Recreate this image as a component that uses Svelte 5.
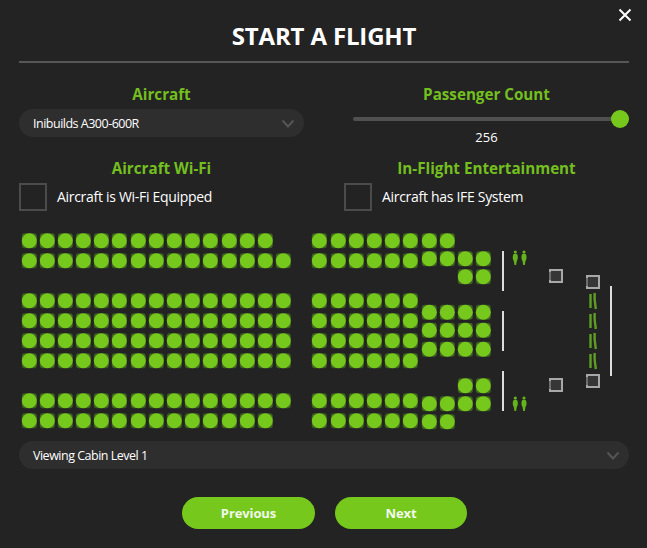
<script>
  const aft = [29.3, 47.3, 65.3, 83.3, 101.3, 119.3, 138.3, 156.3, 174.3, 192.3, 210.3, 229.3, 247.3, 265.3, 283.3];
  const mid = [319.3, 338.3, 356.3, 374.3, 392.3, 410.3];
  const cols = [429.3, 447.3, 465.3, 483.3];
  const seats = [];
  const row = (xs, y) => xs.forEach((x) => seats.push({ x, y }));
  row(aft.slice(0, 14), 240.7);
  row(aft, 260.7);
  row(aft, 300.7);
  row(aft, 320.7);
  row(aft, 340.7);
  row(aft, 360.7);
  row(aft, 400.7);
  row(aft.slice(0, 14), 420.7);
  row([...mid, cols[0], cols[1]], 240.7);
  row(mid, 260.7);
  row(cols, 258.7);
  row(cols.slice(2), 276.7);
  [300.7, 320.7, 340.7, 360.7, 400.7, 420.7].forEach((y) => row(mid, y));
  [312.3, 330.3, 349.3].forEach((y) => row(cols, y));
  row(cols.slice(2), 385.7);
  row(cols, 403.7);
  row(cols.slice(0, 2), 421.7);

  const galleys = [
    { x: 549, y: 269 },
    { x: 586, y: 275 },
    { x: 549, y: 378 },
    { x: 586, y: 374 }
  ];
  const crew = [
    { x: 515.3, y: 250.5 },
    { x: 524, y: 250.5 },
    { x: 515.3, y: 396.5 },
    { x: 524, y: 396.5 }
  ];
  const attendants = [293, 313, 333, 353];
  const bars = [
    { x: 502, y1: 251, y2: 291 },
    { x: 502, y1: 311, y2: 351 },
    { x: 502, y1: 371, y2: 411 },
    { x: 610, y1: 286, y2: 376 }
  ];
</script>

<div class="modal">
  <button class="close" aria-label="Close">
    <svg width="14" height="14" viewBox="0 0 14 14"><path d="M1.5 1.5 12.5 12.5M12.5 1.5 1.5 12.5" /></svg>
  </button>

  <h1>START A FLIGHT</h1>
  <div class="rule"></div>

  <div class="grid top">
    <section>
      <h2>Aircraft</h2>
      <div class="select">
        <span>Inibuilds A300-600R</span>
        <svg class="chev" width="14" height="9" viewBox="0 0 14 9"><path d="M1.5 1.5 7 7.5 12.5 1.5" /></svg>
      </div>
    </section>
    <section>
      <h2>Passenger Count</h2>
      <div class="slider"><div class="thumb"></div></div>
      <div class="count">256</div>
    </section>
  </div>

  <div class="grid second">
    <section>
      <h2>Aircraft Wi-Fi</h2>
      <label class="check"><span class="box"></span><span class="check-text">Aircraft is Wi-Fi Equipped</span></label>
    </section>
    <section>
      <h2>In-Flight Entertainment</h2>
      <label class="check"><span class="box"></span><span class="check-text">Aircraft has IFE System</span></label>
    </section>
  </div>

  <svg class="map" width="647" height="216" viewBox="0 225 647 216">
    {#each seats as s}
      <rect class="seat-back" x={s.x - 7.5} y={s.y - 7.5} width="15" height="15" rx="3" />
      <circle class="seat" cx={s.x} cy={s.y} r="7.5" />
    {/each}
    {#each bars as b}
      <rect class="bar" x={b.x} y={b.y1} width="2" height={b.y2 - b.y1} />
    {/each}
    {#each galleys as g}
      <rect class="galley" x={g.x + 1} y={g.y + 1} width="12" height="12" />
      <path class="galley-in" d="M{g.x + 1} {g.y + 3}V{g.y + 11}" />
    {/each}
    {#each crew as c}
      <g transform="translate({c.x} {c.y})">
        <circle class="crew" cx="0" cy="1.6" r="1.6" />
        <path class="crew" d="M-1.6 3.6C-3 5-2.8 9-1.5 10.5L-.8 14.5H.8L1.5 10.5C2.8 9 3 5 1.6 3.6Z" />
      </g>
    {/each}
    {#each attendants as y}
      <path class="att" d="M590.5 {y + 1}V{y + 15}" />
      <path class="att" d="M594.8 {y}C594 {y + 5} 595 {y + 9} 595.8 {y + 16}" />
    {/each}
  </svg>

  <div class="select wide">
    <span>Viewing Cabin Level 1</span>
    <svg class="chev" width="14" height="9" viewBox="0 0 14 9"><path d="M1.5 1.5 7 7.5 12.5 1.5" /></svg>
  </div>

  <div class="actions">
    <button class="btn prev">Previous</button>
    <button class="btn next">Next</button>
  </div>
</div>

<style>
  :global(body) {
    margin: 0;
    background: #232323;
  }
  .modal {
    position: relative;
    box-sizing: border-box;
    width: 647px;
    height: 548px;
    padding: 19px 18px 0 19px;
    background: #232323;
    color: #fff;
    font-family: "Open Sans", "Liberation Sans", sans-serif;
    overflow: hidden;
  }
  .close {
    position: absolute;
    top: 8px;
    right: 15px;
    padding: 0;
    width: 14px;
    height: 14px;
    border: 0;
    background: none;
  }
  .close svg {
    display: block;
  }
  .close path {
    stroke: #fff;
    stroke-width: 2;
    fill: none;
  }
  h1 {
    margin: 0;
    font-size: 24px;
    line-height: 34px;
    font-weight: 700;
    text-align: center;
    letter-spacing: -0.15px;
  }
  .rule {
    height: 2px;
    margin-top: 8px;
    background: #565656;
  }
  .grid {
    display: grid;
    grid-template-columns: 285px 285px;
    column-gap: 40px;
  }
  .top {
    margin-top: 20px;
  }
  .second {
    margin-top: 11px;
    height: 68px;
  }
  h2 {
    margin: 0;
    font-size: 15.2px;
    line-height: 22px;
    font-weight: 700;
    color: #73bf1f;
    text-align: center;
  }
  .select {
    display: flex;
    align-items: center;
    justify-content: space-between;
    box-sizing: border-box;
    height: 28px;
    margin-top: 4px;
    padding: 1px 9px 0 14px;
    border-radius: 14px;
    background: #2e2e2e;
    font-size: 12.5px;
    letter-spacing: -0.5px;
  }
  .chev path {
    fill: none;
    stroke: #555;
    stroke-width: 2;
  }
  .slider {
    position: relative;
    height: 4px;
    margin: 12px 0 0 9px;
    background: #505050;
    border-radius: 2px;
  }
  .thumb {
    position: absolute;
    right: 0;
    top: -7px;
    width: 18px;
    height: 18px;
    border-radius: 50%;
    background: #76c81d;
  }
  .count {
    margin-top: 7px;
    font-size: 13px;
    line-height: 18px;
    text-align: center;
  }
  .check {
    display: flex;
    align-items: center;
    gap: 10px;
    margin-top: 4px;
    font-size: 14px;
    letter-spacing: -0.3px;
  }
  .check-text {
    padding-bottom: 2px;
  }
  .box {
    box-sizing: border-box;
    width: 28px;
    height: 28px;
    border: 2px solid #4b4b4b;
  }
  .map {
    display: block;
    margin: 0 0 0 -19px;
  }
  .seat-back {
    fill: #3f6220;
  }
  .seat {
    fill: #76c81d;
  }
  .bar {
    fill: #dcdcdc;
  }
  .galley {
    fill: #363636;
    stroke: #a8a8a8;
    stroke-width: 2;
  }
  .galley-in {
    fill: none;
    stroke: #6e6e6e;
    stroke-width: 2;
  }
  .crew {
    fill: #64b41c;
  }
  .att {
    fill: none;
    stroke: #5f9e22;
    stroke-width: 2.4;
  }
  .wide {
    margin-top: 0;
  }
  .actions {
    display: flex;
    justify-content: flex-start;
    gap: 20px;
    margin: 28px 0 0 163px;
  }
  .btn {
    height: 32px;
    padding: 0;
    border: 0;
    border-radius: 16px;
    background: #76c81d;
    color: #f2f8ea;
    font-family: inherit;
    font-size: 13px;
    font-weight: 700;
    letter-spacing: -0.1px;
  }
  .prev {
    width: 133px;
  }
  .next {
    width: 132px;
  }
</style>
